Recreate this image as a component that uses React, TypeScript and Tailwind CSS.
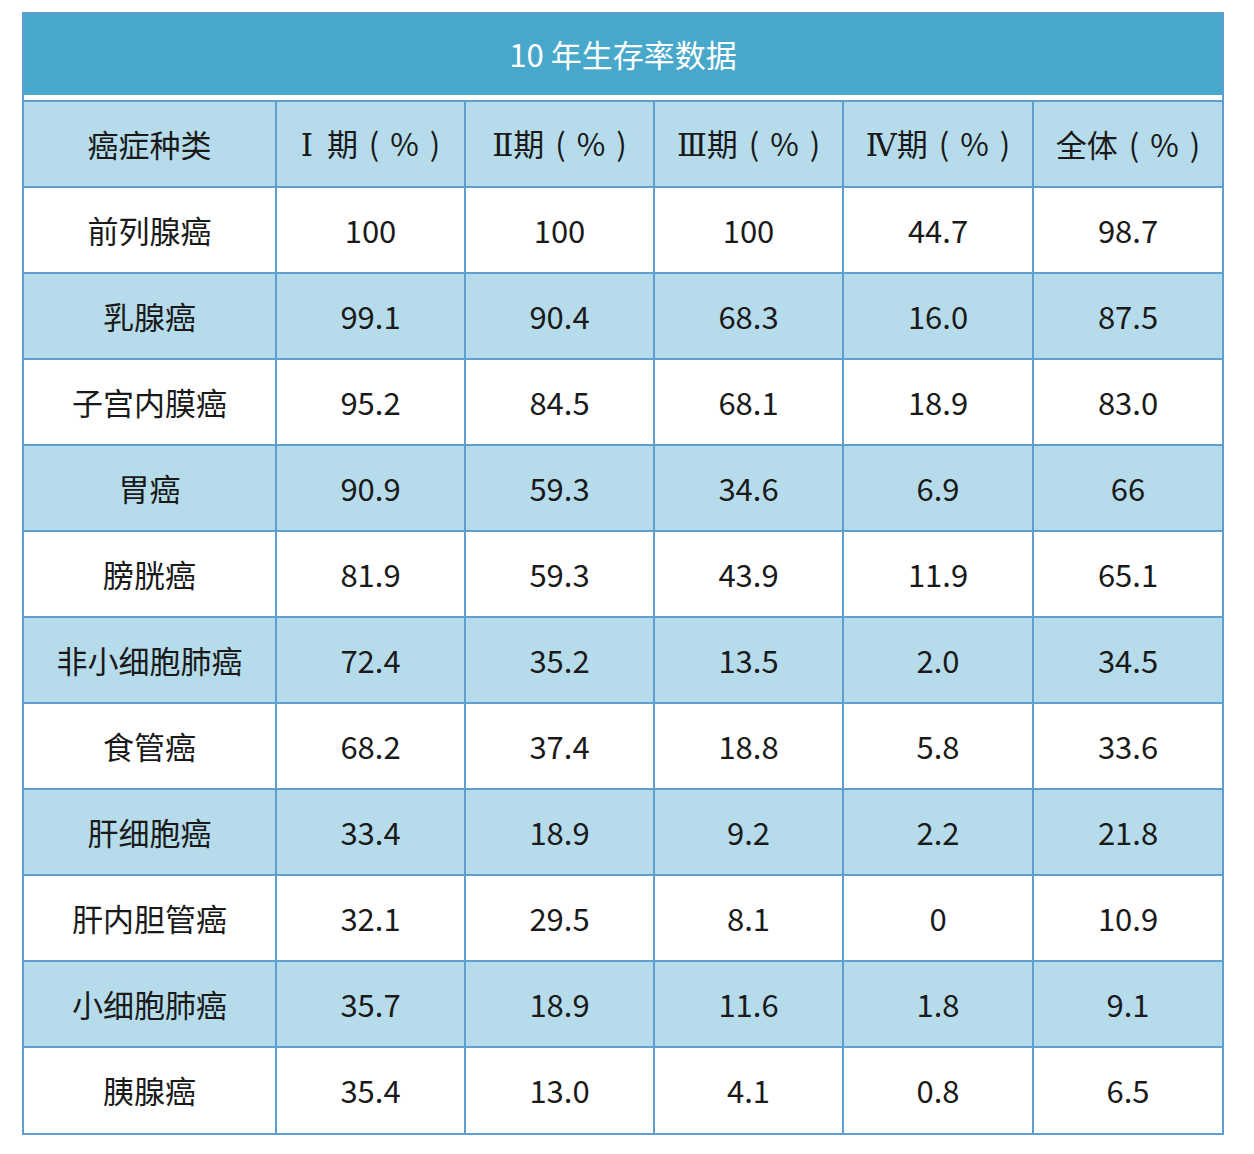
const rows: [string, string, string, string, string, string][] = [
  ["前列腺癌", "100", "100", "100", "44.7", "98.7"],
  ["乳腺癌", "99.1", "90.4", "68.3", "16.0", "87.5"],
  ["子宫内膜癌", "95.2", "84.5", "68.1", "18.9", "83.0"],
  ["胃癌", "90.9", "59.3", "34.6", "6.9", "66"],
  ["膀胱癌", "81.9", "59.3", "43.9", "11.9", "65.1"],
  ["非小细胞肺癌", "72.4", "35.2", "13.5", "2.0", "34.5"],
  ["食管癌", "68.2", "37.4", "18.8", "5.8", "33.6"],
  ["肝细胞癌", "33.4", "18.9", "9.2", "2.2", "21.8"],
  ["肝内胆管癌", "32.1", "29.5", "8.1", "0", "10.9"],
  ["小细胞肺癌", "35.7", "18.9", "11.6", "1.8", "9.1"],
  ["胰腺癌", "35.4", "13.0", "4.1", "0.8", "6.5"],
];

const stages = ["Ⅰ ", "Ⅱ", "Ⅲ", "Ⅳ"];
const colWidths = ["w-[252px]", "w-[189px]", "w-[189px]", "w-[189px]", "w-[190px]", "w-[189px]"];

export default function App() {
  return (
    <div
      className="min-h-screen bg-white pl-[22px] pt-[12px] text-[#1a1a1a]"
      style={{ fontFamily: '"Noto Sans CJK SC", "Noto Sans", sans-serif' }}
    >
      <div className="w-[1202px] border-2 border-[#5f9fcf]">
        <div className="flex h-[81px] items-center justify-center bg-[#48a8cb] text-[31px] text-white">
          10 年生存率数据
        </div>
        <div className="h-[5px] bg-white" />
        <table className="w-full table-fixed border-collapse text-[31px]">
          <colgroup>
            {colWidths.map((w, i) => (
              <col key={i} className={w} />
            ))}
          </colgroup>
          <thead>
            <tr className="h-[86px] bg-[#b6dceb]">
              <th className="border-t-2 border-[#5f9fcf] text-center font-normal">癌症种类</th>
              {stages.map((s) => (
                <th
                  key={s}
                  className="whitespace-pre border-l-2 border-t-2 border-[#5f9fcf] text-center font-normal [word-spacing:4px]"
                >
                  <span style={{ fontFamily: '"DejaVu Serif", "Liberation Serif", serif' }} className="text-[31px]">
                    {s}
                  </span>
                  期 ( % )
                </th>
              ))}
              <th className="whitespace-pre border-l-2 border-t-2 border-[#5f9fcf] text-center font-normal [word-spacing:4px]">
                全体 ( % )
              </th>
            </tr>
          </thead>
          <tbody>
            {rows.map((r, i) => (
              <tr key={r[0]} className={i % 2 === 0 ? "h-[86px] bg-white" : "h-[86px] bg-[#b6dceb]"}>
                {r.map((c, j) => (
                  <td
                    key={j}
                    className={
                      j === 0
                        ? "border-t-2 border-[#5f9fcf] text-center"
                        : "border-l-2 border-t-2 border-[#5f9fcf] text-center"
                    }
                  >
                    {c}
                  </td>
                ))}
              </tr>
            ))}
          </tbody>
        </table>
      </div>
    </div>
  );
}
